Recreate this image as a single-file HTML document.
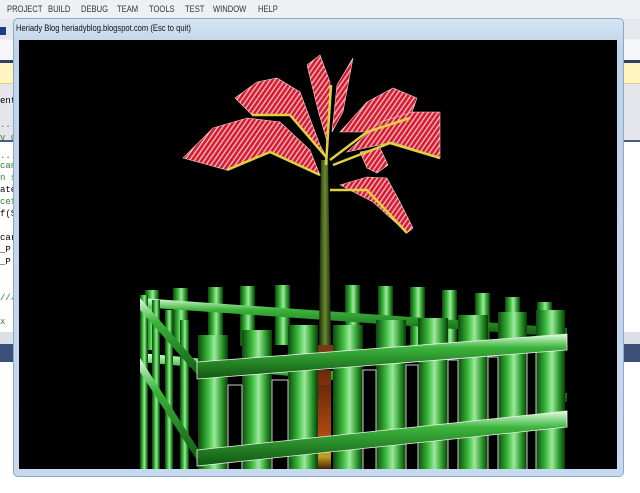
<!DOCTYPE html>
<html><head><meta charset="utf-8"><style>
html,body{margin:0;padding:0}
body{width:640px;height:493px;overflow:hidden;position:relative;background:#eef0f4;font-family:"Liberation Sans",sans-serif}
.menu span{position:absolute;top:4px;font-size:9.5px;color:#333;transform:scaleX(0.8);transform-origin:0 0}
.abs{position:absolute}
.code{font-family:"Liberation Mono",monospace;font-size:9px;position:absolute;left:0;width:13px;overflow:hidden;white-space:nowrap}
</style></head><body>
<div class="menu"><span style="left:7px">PROJECT</span><span style="left:48px">BUILD</span><span style="left:81px">DEBUG</span><span style="left:117px">TEAM</span><span style="left:149px">TOOLS</span><span style="left:185px">TEST</span><span style="left:213px">WINDOW</span><span style="left:258px">HELP</span></div>
<div class="abs" style="left:0;top:19px;width:640px;height:20px;background:#e6e8ee"></div>
<div class="abs" style="left:0;top:27px;width:6px;height:8px;background:#1e3a8a"></div>
<div class="abs" style="left:0;top:40px;width:640px;height:20px;background:#f5f6f8;border-bottom:1px solid #ccc"></div>
<div class="abs" style="left:0;top:60px;width:640px;height:3px;background:#2f3f60"></div>
<div class="abs" style="left:0;top:63px;width:640px;height:20px;background:#fdf4c0;border-bottom:1px solid #e0d080"></div>
<div class="abs" style="left:0;top:84px;width:640px;height:56px;background:#e4e6ec"></div>
<div class="abs" style="left:0;top:140px;width:640px;height:2px;background:#4a5a80"></div>
<div class="abs" style="left:0;top:142px;width:640px;height:190px;background:#fff"></div>
<div class="abs" style="left:0;top:332px;width:640px;height:12px;background:#dcdfe6"></div>
<div class="abs" style="left:0;top:344px;width:640px;height:18px;background:#3d5078"></div>
<div class="abs" style="left:0;top:362px;width:640px;height:131px;background:#fff"></div>
<div class="code" style="top:96px">ent</div>
<div class="code" style="top:120px;color:#2a8a2a">...</div>
<div class="code" style="top:133px;color:#2a8a2a">v o</div>
<div class="code" style="top:151px;color:#2a8a2a">...</div>
<div class="code" style="top:161px;color:#2a8a2a">can</div>
<div class="code" style="top:173px;color:#2a8a2a">n s</div>
<div class="code" style="top:185px">ate</div>
<div class="code" style="top:197px;color:#2a8a2a">cef</div>
<div class="code" style="top:209px">f(S</div>
<div class="code" style="top:233px">car</div>
<div class="code" style="top:245px">_P</div>
<div class="code" style="top:257px">_P</div>
<div class="code" style="top:293px;color:#2a8a2a">///</div>
<div class="code" style="top:317px;color:#2a8a2a">x</div>
<!-- window -->
<div class="abs" style="left:13px;top:18px;width:609px;height:457px;background:linear-gradient(#d6e4f2,#bdd3ea 30px,#c6d9ee);border:1px solid #8ea7c4;border-radius:5px"></div>
<div class="abs" style="left:16px;top:23px;font-size:9.5px;color:#111;white-space:nowrap;transform:scaleX(0.8);transform-origin:0 0">Heriady Blog heriadyblog.blogspot.com (Esc to quit)</div>
<div class="abs" style="left:19px;top:40px;width:598px;height:429px;background:#000;overflow:hidden">
<svg width="598" height="429" viewBox="19 40 598 429" xmlns="http://www.w3.org/2000/svg">
<defs>
<linearGradient id="post" x1="0" x2="1"><stop offset="0" stop-color="#0c4a0c"/><stop offset=".35" stop-color="#3fbf3f"/><stop offset=".55" stop-color="#9ee89e"/><stop offset=".8" stop-color="#2a9a2a"/><stop offset="1" stop-color="#0a3a0a"/></linearGradient>
<linearGradient id="rail" x1="0" y1="0" x2="0" y2="1"><stop offset="0" stop-color="#dfffdf"/><stop offset=".3" stop-color="#3cb43c"/><stop offset="1" stop-color="#105510"/></linearGradient>
<linearGradient id="trunk" x1="0" x2="1"><stop offset="0" stop-color="#1a2a08"/><stop offset=".5" stop-color="#6a8a30"/><stop offset="1" stop-color="#1a2a08"/></linearGradient>
<linearGradient id="trunk2" x1="0" y1="0" x2="0" y2="1"><stop offset="0" stop-color="#6a2a08"/><stop offset=".6" stop-color="#b04a10"/><stop offset=".85" stop-color="#c0a020"/><stop offset="1" stop-color="#4a2008"/></linearGradient>
<pattern id="leaf" width="4" height="4" patternUnits="userSpaceOnUse" patternTransform="rotate(35)"><rect width="4" height="4" fill="#f0b8c0"/><rect width="2.6" height="4" fill="#d81c30"/></pattern>
</defs>
<g fill="url(#post)">
<rect x="145" y="290" width="14" height="60"/><rect x="173" y="288" width="15" height="60"/><rect x="208" y="287" width="15" height="60"/><rect x="240" y="286" width="15" height="60"/><rect x="275" y="285" width="15" height="60"/><rect x="345" y="285" width="15" height="60"/><rect x="378" y="286" width="15" height="60"/><rect x="410" y="287" width="15" height="60"/><rect x="442" y="290" width="15" height="60"/><rect x="475" y="293" width="15" height="60"/><rect x="505" y="297" width="15" height="60"/><rect x="537" y="302" width="15" height="60"/>
</g>
<polygon points="140,298 567,328 567,337 140,307" fill="url(#rail)"/>
<polygon points="140,353 567,393 567,402 140,362" fill="url(#rail)"/>
<polygon points="321,160 328,160 331,345 319,345" fill="url(#trunk)"/>
<rect x="317" y="345" width="16" height="15" fill="#7a3a10"/>
<rect x="318" y="370" width="13" height="85" fill="url(#trunk2)"/>
<g fill="url(#post)">
<rect x="140" y="295" width="8" height="174"/><rect x="152" y="300" width="8" height="169"/><rect x="165" y="310" width="8" height="159"/><rect x="180" y="320" width="9" height="149"/>
</g>
<polygon points="140,298 200,366 200,378 140,310" fill="url(#rail)"/>
<polygon points="140,358 200,452 200,465 140,372" fill="url(#rail)"/>
<g fill="url(#post)">
<rect x="198" y="335" width="30" height="134"/><rect x="242" y="330" width="30" height="139"/><rect x="288" y="325" width="30" height="144"/><rect x="333" y="325" width="30" height="144"/><rect x="376" y="320" width="30" height="149"/><rect x="418" y="318" width="30" height="151"/><rect x="458" y="315" width="30" height="154"/><rect x="498" y="312" width="29" height="157"/><rect x="536" y="310" width="29" height="159"/>
</g>
<g fill="#000" stroke="#ccc" stroke-width="1">
<rect x="228" y="385" width="14" height="90"/><rect x="272" y="380" width="16" height="95"/><rect x="363" y="370" width="13" height="105"/><rect x="406" y="365" width="12" height="110"/><rect x="448" y="360" width="10" height="115"/><rect x="488" y="357" width="10" height="115"/><rect x="527" y="352" width="9" height="120"/>
</g>
<rect x="318" y="385" width="13" height="84" fill="url(#trunk2)"/>
<polygon points="197,362 567,334 567,350 197,379" fill="url(#rail)" stroke="#eee" stroke-width="0.8"/>
<polygon points="197,450 567,411 567,427 197,466" fill="url(#rail)" stroke="#eee" stroke-width="0.8"/>
<g fill="url(#leaf)" stroke="#f8d0d0" stroke-width="0.6">
<polygon points="235,98 257,82 277,78 300,92 320,145 327,158 290,115 252,115"/>
<polygon points="183,158 213,128 247,118 280,122 310,150 320,175 270,152 227,170"/>
<polygon points="307,65 320,55 330,82 328,145 318,110"/>
<polygon points="332,132 337,85 353,58 343,112"/>
<polygon points="340,132 367,102 393,88 417,98 410,118 367,132"/>
<polygon points="347,152 380,122 413,112 440,112 440,158 393,142"/>
<polygon points="360,152 380,148 388,165 377,173 367,168"/>
<polygon points="340,185 367,177 387,178 400,202 413,228 407,233 373,202"/>
</g>
<g fill="none" stroke="#e0d040" stroke-width="2.5">
<path d="M320,175 L270,152 L227,170"/>
<path d="M327,158 L290,115 L252,115"/>
<path d="M326,165 L331,85"/>
<path d="M330,160 L367,132 L410,118"/>
<path d="M333,165 L390,143 L440,158"/>
<path d="M330,190 L367,190 L407,233"/>
</g>
</svg>
</div>
</body></html>
